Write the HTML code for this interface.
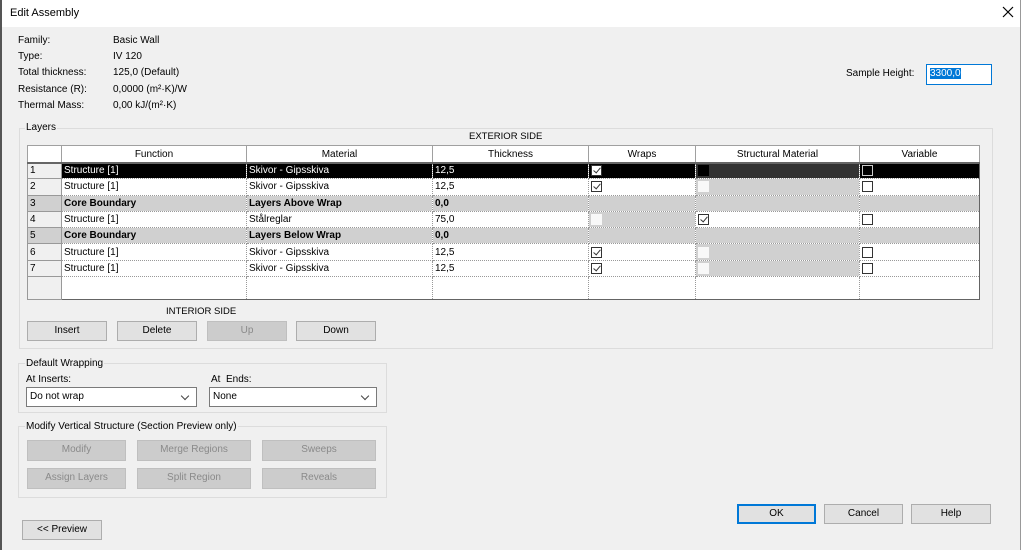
<!DOCTYPE html>
<html><head><style>
*{box-sizing:border-box;margin:0;padding:0}
body{width:1024px;height:550px;background:#f0f0f0;font-family:"Liberation Sans",sans-serif;font-size:10px;color:#000;position:relative;overflow:hidden}
.a{position:absolute;white-space:nowrap}
.title{left:0;top:0;width:1020px;height:27px;background:#fff}
.btn{position:absolute;background:#e1e1e1;border:1px solid #adadad;text-align:center;line-height:18px;font-size:10px}
.dis{background:#ccc;border-color:#bfbfbf;color:#8a8a8a}
.grp{position:absolute;border:1px solid #dcdcdc}
.glab{position:absolute;background:#f0f0f0;padding:0 1px}
table{position:absolute;left:27px;top:145px;border-collapse:collapse;background:#fff;border:1px solid #646464;table-layout:fixed;width:952px}
td,th{border:1px dotted #999;height:16.3px;padding:0 2px;font-size:10px;white-space:nowrap;overflow:hidden}
th{font-weight:normal;background:#fff;border:1px solid #a0a0a0;border-bottom:2px solid #666;text-align:center;height:17px;padding-top:1px}
td.n{background:#f0f0f0;border:1px solid #999;font-weight:normal!important}
tr.g td{background:#d0d0d0;font-weight:bold}
tr.s td{background:#000;color:#fff}
.cb{display:inline-block;width:11px;height:11px;border:1px solid #333;vertical-align:middle;position:relative;background:#fff}
.cb.c::after{content:"";position:absolute;left:3px;top:0px;width:3px;height:6px;border:solid #333;border-width:0 1px 1px 0;transform:rotate(40deg)}
.gr{background:#d0d0d0!important}
.wb{display:inline-block;width:11px;height:11px;background:#f8f8f8;vertical-align:middle}
.sel{position:absolute;background:#fff;border:1px solid #7a7a7a;height:20px;line-height:18px;padding-left:3px}
.sel::after{content:"";position:absolute;right:8px;top:5px;width:5px;height:5px;border:solid #444;border-width:0 1px 1px 0;transform:rotate(45deg)}
</style></head><body>
<div class="a title"></div>
<div class="a" style="left:0;top:0;width:2px;height:550px;background:#555"></div>
<div class="a" style="left:1020px;top:0;width:4px;height:550px;background:#fff;border-left:1px solid #999"></div>
<div class="a" style="left:10px;top:7px;font-size:11px">Edit Assembly</div>
<svg class="a" style="left:1002px;top:6px" width="12" height="12"><path d="M1 1L11 11M11 1L1 11" stroke="#000" stroke-width="1.2"/></svg>

<div class="a" style="left:18px;top:35px">Family:</div><div class="a" style="left:113px;top:35px">Basic Wall</div>
<div class="a" style="left:18px;top:51px">Type:</div><div class="a" style="left:113px;top:51px">IV 120</div>
<div class="a" style="left:18px;top:67px">Total thickness:</div><div class="a" style="left:113px;top:67px">125,0 (Default)</div>
<div class="a" style="left:18px;top:84px">Resistance (R):</div><div class="a" style="left:113px;top:84px">0,0000 (m²·K)/W</div>
<div class="a" style="left:18px;top:100px">Thermal Mass:</div><div class="a" style="left:113px;top:100px">0,00 kJ/(m²·K)</div>

<div class="a" style="left:846px;top:68px">Sample Height:</div>
<div class="a" style="left:926px;top:64px;width:66px;height:21px;background:#fff;border:1px solid #0078d7;padding:3px 3px"><span style="background:#0078d7;color:#fff">3300,0</span></div>

<div class="grp" style="left:19px;top:128px;width:974px;height:221px"></div>
<div class="glab" style="left:25px;top:122px">Layers</div>
<div class="a" style="left:469px;top:131px;font-size:9.5px">EXTERIOR SIDE</div>

<table>
<colgroup><col style="width:34px"><col style="width:185px"><col style="width:186px"><col style="width:156px"><col style="width:107px"><col style="width:164px"><col style="width:120px"></colgroup>
<tr><th></th><th>Function</th><th>Material</th><th>Thickness</th><th>Wraps</th><th>Structural Material</th><th>Variable</th></tr>
<tr class="s"><td class="n" style="background:#f0f0f0;color:#000">1</td><td>Structure [1]</td><td>Skivor - Gipsskiva</td><td>12,5</td><td><span class="cb c"></span></td><td style="background:#333"><span class="wb" style="background:#000"></span></td><td><span class="cb" style="background:#000;border-color:#ccc"></span></td></tr>
<tr><td class="n">2</td><td>Structure [1]</td><td>Skivor - Gipsskiva</td><td>12,5</td><td><span class="cb c"></span></td><td class="gr"><span class="wb"></span></td><td><span class="cb"></span></td></tr>
<tr class="g"><td class="n">3</td><td>Core Boundary</td><td>Layers Above Wrap</td><td>0,0</td><td></td><td></td><td></td></tr>
<tr><td class="n">4</td><td>Structure [1]</td><td>Stålreglar</td><td>75,0</td><td class="gr"><span class="wb"></span></td><td><span class="cb c"></span></td><td><span class="cb"></span></td></tr>
<tr class="g"><td class="n">5</td><td>Core Boundary</td><td>Layers Below Wrap</td><td>0,0</td><td></td><td></td><td></td></tr>
<tr><td class="n">6</td><td>Structure [1]</td><td>Skivor - Gipsskiva</td><td>12,5</td><td><span class="cb c"></span></td><td class="gr"><span class="wb"></span></td><td><span class="cb"></span></td></tr>
<tr><td class="n">7</td><td>Structure [1]</td><td>Skivor - Gipsskiva</td><td>12,5</td><td><span class="cb c"></span></td><td class="gr"><span class="wb"></span></td><td><span class="cb"></span></td></tr>
<tr><td class="n" style="height:23px"></td><td></td><td></td><td></td><td></td><td></td><td></td></tr>
</table>
<div class="a" style="left:166px;top:306px;font-size:9.5px">INTERIOR SIDE</div>
<div class="btn" style="left:27px;top:321px;width:80px;height:20px">Insert</div>
<div class="btn" style="left:117px;top:321px;width:80px;height:20px">Delete</div>
<div class="btn dis" style="left:207px;top:321px;width:80px;height:20px">Up</div>
<div class="btn" style="left:296px;top:321px;width:80px;height:20px">Down</div>

<div class="grp" style="left:18px;top:363px;width:369px;height:50px"></div>
<div class="glab" style="left:25px;top:358px">Default Wrapping</div>
<div class="a" style="left:26px;top:374px">At Inserts:</div>
<div class="a" style="left:211px;top:374px">At &nbsp;Ends:</div>
<div class="sel" style="left:26px;top:387px;width:171px">Do not wrap</div>
<div class="sel" style="left:209px;top:387px;width:168px">None</div>

<div class="grp" style="left:18px;top:426px;width:369px;height:72px"></div>
<div class="glab" style="left:25px;top:421px">Modify Vertical Structure (Section Preview only)</div>
<div class="btn dis" style="left:27px;top:440px;width:99px;height:21px">Modify</div>
<div class="btn dis" style="left:137px;top:440px;width:114px;height:21px">Merge Regions</div>
<div class="btn dis" style="left:262px;top:440px;width:114px;height:21px">Sweeps</div>
<div class="btn dis" style="left:27px;top:468px;width:99px;height:21px">Assign Layers</div>
<div class="btn dis" style="left:137px;top:468px;width:114px;height:21px">Split Region</div>
<div class="btn dis" style="left:262px;top:468px;width:114px;height:21px">Reveals</div>

<div class="btn" style="left:22px;top:520px;width:80px;height:20px">&lt;&lt; Preview</div>
<div class="btn" style="left:737px;top:504px;width:79px;height:20px;border:2px solid #0078d7;line-height:16px">OK</div>
<div class="btn" style="left:824px;top:504px;width:79px;height:20px">Cancel</div>
<div class="btn" style="left:911px;top:504px;width:80px;height:20px">Help</div>
</body></html>
